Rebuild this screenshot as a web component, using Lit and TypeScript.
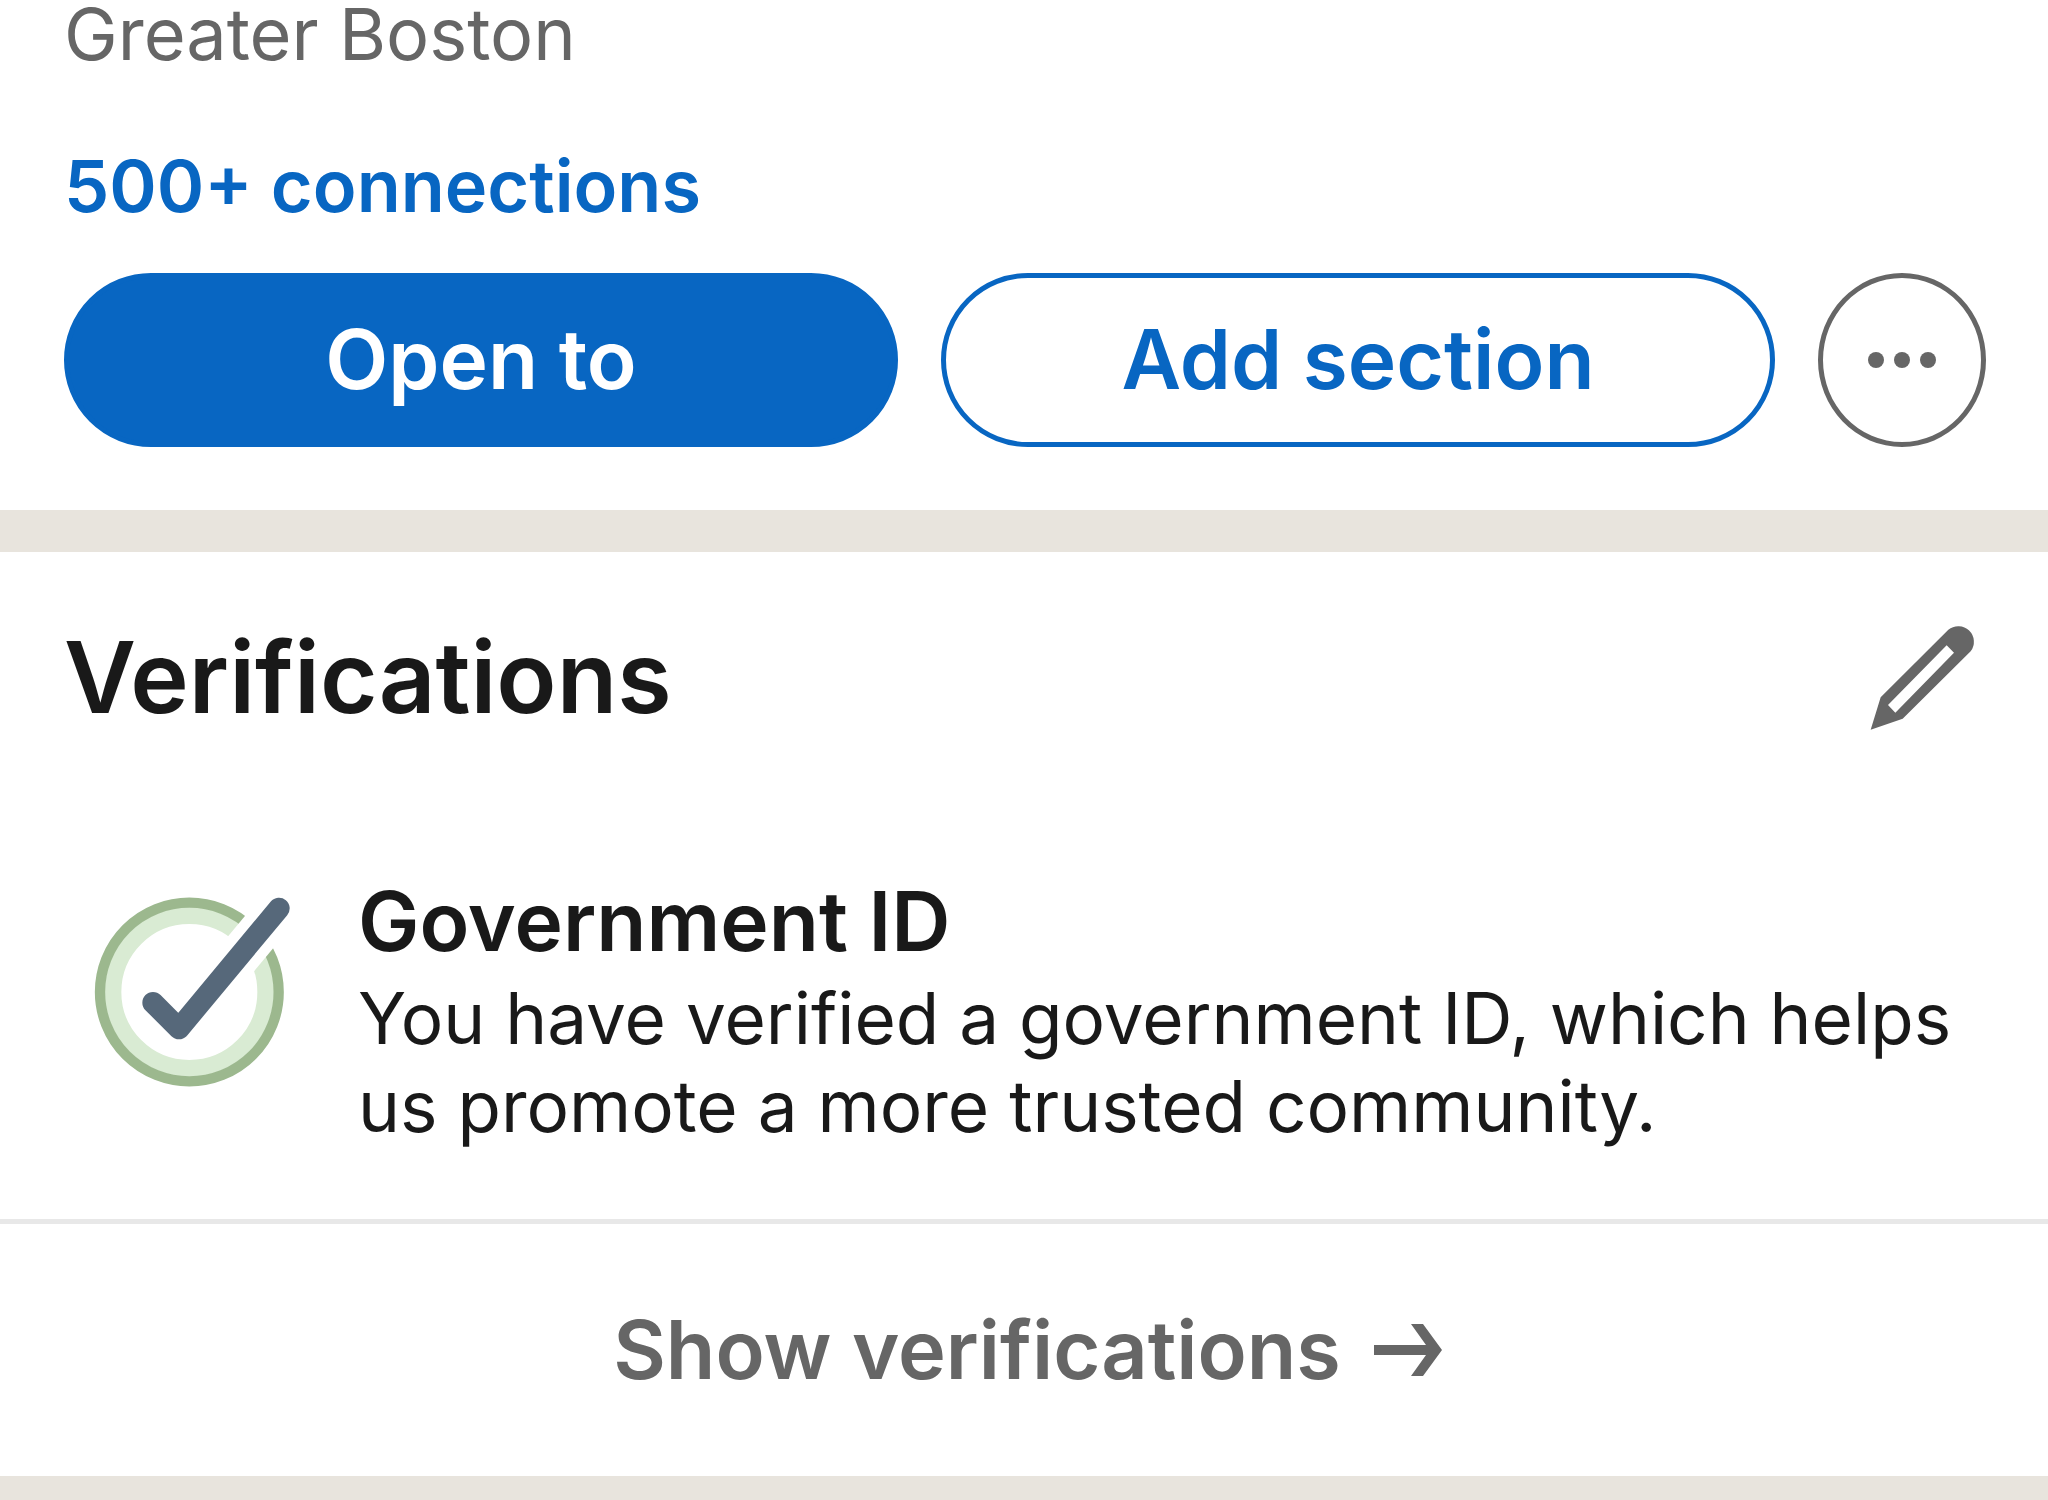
import { LitElement, html, css } from "lit";
import { customElement } from "lit/decorators.js";

@customElement("profile-summary")
class ProfileSummary extends LitElement {
  static styles = css`
    :host {
      display: block;
      background: #fff;
      padding: 0 62px 63px 64px;
    }
    .location {
      margin: 0;
      font-size: 72px;
      line-height: 68px;
      color: #666;
    }
    .connections {
      display: block;
      width: fit-content;
      margin-top: 74px;
      font-size: 72px;
      line-height: 88px;
      font-weight: 600;
      color: #0866c2;
      text-decoration: none;
    }
    .actions {
      display: grid;
      grid-template-columns: 1fr 1fr 168px;
      gap: 43px;
      margin-top: 43px;
    }
    .action {
      box-sizing: border-box;
      height: 174px;
      padding: 0;
      border: 5px solid #0866c2;
      border-radius: 87px;
      background: #fff;
      color: #0866c2;
      font: inherit;
      font-size: 82px;
      font-weight: 600;
      line-height: 104px;
    }
    .primary {
      background: #0866c2;
      color: #fff;
    }
    .more {
      display: flex;
      align-items: center;
      justify-content: center;
      border-color: #666;
      border-radius: 50%;
      color: #666;
    }
    .dots {
      display: block;
      width: 72px;
      height: 24px;
    }
  `;

  render() {
    return html`
      <p class="location">Greater Boston</p>
      <a class="connections" href="#connections">500+ connections</a>
      <div class="actions">
        <button class="action primary" type="button">Open to</button>
        <button class="action" type="button">Add section</button>
        <button class="action more" type="button" aria-label="More">
          <svg class="dots" viewBox="0 0 72 24" fill="currentColor" aria-hidden="true">
            <circle cx="10" cy="12" r="8" />
            <circle cx="36" cy="12" r="8" />
            <circle cx="62" cy="12" r="8" />
          </svg>
        </button>
      </div>
    `;
  }
}

@customElement("verification-card")
class VerificationCard extends LitElement {
  static styles = css`
    :host {
      display: block;
      background: #fff;
      color: #191919;
    }
    .header {
      display: flex;
      align-items: center;
      justify-content: space-between;
      padding: 61px 62px 0 64px;
    }
    .title {
      margin: 0;
      font-size: 99px;
      line-height: 128px;
      font-weight: 600;
    }
    .edit {
      padding: 0;
      border: 0;
      background: none;
      color: #666;
    }
    .pencil {
      display: block;
      width: 128px;
      height: 128px;
    }
    .item {
      display: flex;
      align-items: flex-start;
      gap: 48px;
      padding: 129px 62px 69px 64px;
    }
    .badge {
      flex: none;
      width: 246px;
      height: 220px;
    }
    .name {
      margin: 0;
      font-size: 82px;
      line-height: 104px;
      font-weight: 600;
    }
    .detail {
      margin: 0;
      font-size: 71px;
      line-height: 88px;
    }
    .show {
      display: flex;
      align-items: center;
      justify-content: center;
      gap: 32px;
      box-sizing: border-box;
      width: 100%;
      height: 257px;
      padding: 0 0 0 8px;
      border: 0;
      border-top: 5px solid #e8e8e8;
      background: none;
      color: #666;
      font: inherit;
      font-size: 81px;
      line-height: 104px;
      font-weight: 600;
    }
    .arrow {
      width: 70px;
      height: 54px;
    }
  `;

  render() {
    return html`
      <div class="header">
        <h2 class="title">Verifications</h2>
        <button class="edit" type="button" aria-label="Edit verifications">
          <svg class="pencil" viewBox="54 40 384 384" fill="currentColor" aria-hidden="true">
            <path
              fill-rule="evenodd"
              d="M92 390 122 293 325 90A47 47 0 0 1 392 155L188 357ZM320 137 144 316 166 339 342 159Z"
            />
          </svg>
        </button>
      </div>
      <div class="item">
        <svg class="badge" viewBox="-48 -28 738 660" fill="none" aria-hidden="true">
          <circle cx="328" cy="338" r="229" stroke="#d9ebd3" stroke-width="50" />
          <circle cx="328" cy="338" r="268" stroke="#9cb88e" stroke-width="31" />
          <path d="M357 375 645 29" stroke="#fff" stroke-width="127" />
          <path
            d="M219 370 297 448 597 87"
            stroke="#56687a"
            stroke-width="64"
            stroke-linecap="round"
            stroke-linejoin="round"
          />
        </svg>
        <div>
          <h3 class="name">Government ID</h3>
          <p class="detail">
            You have verified a government ID, which helps us promote a more trusted community.
          </p>
        </div>
      </div>
      <button class="show" type="button">
        Show verifications
        <svg class="arrow" viewBox="0 0 70 54" fill="currentColor" aria-hidden="true">
          <path d="M38 1H50L69 27 50 53H38L53 32H1V22H53Z" />
        </svg>
      </button>
    `;
  }
}

@customElement("app-root")
class AppRoot extends LitElement {
  static styles = css`
    :host {
      display: block;
      min-height: 100vh;
      box-sizing: border-box;
      padding-bottom: 24px;
      background: #e8e4dd;
      font-family: Inter, "Liberation Sans", sans-serif;
    }
    .page {
      display: flex;
      flex-direction: column;
      gap: 42px;
    }
  `;

  render() {
    return html`
      <main class="page">
        <profile-summary></profile-summary>
        <verification-card></verification-card>
      </main>
    `;
  }
}
